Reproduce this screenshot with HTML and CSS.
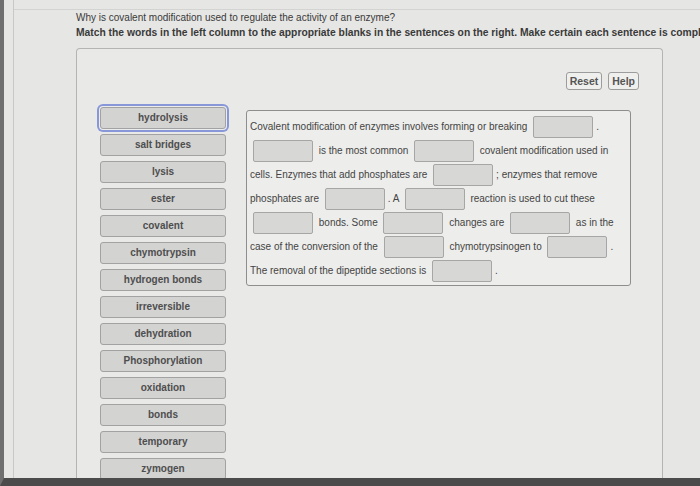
FILE: index.html
```html
<!DOCTYPE html>
<html lang="en">
<head>
  <meta charset="UTF-8" />
  <meta name="viewport" content="width=device-width, initial-scale=1.0"/>
  <title>Covalent modification</title>
  <link rel="stylesheet" href="styles.css">
</head>
<body>
  <div class="screen">
    <div class="question">
      <p>Why is covalent modification used to regulate the activity of an enzyme?</p>
      <p class="instructions">Match the words in the left column to the appropriate blanks in the sentences on the right. Make certain each sentence is complete before submitting your answer.</p>
    </div>

    <div class="panel">
      <div class="toolbar">
        <button class="btn">Reset</button>
        <button class="btn">Help</button>
      </div>

      <div class="workspace">
        <div class="word-bank">
          <div class="tile selected">hydrolysis</div>
          <div class="tile">salt bridges</div>
          <div class="tile">lysis</div>
          <div class="tile">ester</div>
          <div class="tile">covalent</div>
          <div class="tile">chymotrypsin</div>
          <div class="tile">hydrogen bonds</div>
          <div class="tile">irreversible</div>
          <div class="tile">dehydration</div>
          <div class="tile">Phosphorylation</div>
          <div class="tile">oxidation</div>
          <div class="tile">bonds</div>
          <div class="tile">temporary</div>
          <div class="tile">zymogen</div>
        </div>

        <div class="sentences">
          Covalent modification of enzymes involves forming or breaking <span class="blank"></span>.
          <span class="blank"></span> is the most common <span class="blank"></span> covalent modification used in
          cells. Enzymes that add phosphates are <span class="blank"></span>; enzymes that remove
          phosphates are <span class="blank"></span>. A <span class="blank"></span> reaction is used to cut these
          <span class="blank"></span> bonds. Some <span class="blank"></span> changes are <span class="blank"></span> as in the
          case of the conversion of the <span class="blank"></span> chymotrypsinogen to <span class="blank"></span>.
          The removal of the dipeptide sections is <span class="blank"></span>.
        </div>
      </div>
    </div>
  </div>
</body>
</html>
```

FILE: styles.css
```css
* {
  box-sizing: border-box;
}

body {
  margin: 0;
  height: 486px;
  overflow: hidden;
  background-color: #e6e6e4;
  color: #3a3a3a;
  font-family: "Liberation Sans", Arial, sans-serif;
  border-left: 4px solid #6f6f6f;
  border-bottom: 8px solid #4b4b4b;
}

.screen {
  height: 100%;
  margin-left: 9px;
  padding-top: 9px;
  border-left: 1px solid #c8c8c6;
  display: flex;
  flex-direction: column;
}

.question {
  flex-shrink: 0;
  border-top: 1px solid #d3d3d1;
  padding-left: 62px;
  font-size: 10px;
  line-height: 15px;
  white-space: nowrap;
  overflow: hidden;
}

.question p {
  margin: 0;
}

.instructions {
  font-weight: bold;
  font-size: 10.3px;
}

.panel {
  flex: 1;
  min-height: 0;
  overflow: hidden;
  margin: 8px 37px 0 62px;
  padding: 23px 23px 0;
  border: 1px solid #b4b4b2;
  border-bottom: none;
  border-radius: 4px 4px 0 0;
  background-color: #e9e9e7;
}

.toolbar {
  display: flex;
  justify-content: flex-end;
  gap: 6px;
}

.btn {
  height: 18px;
  padding: 0 3px;
  font-family: inherit;
  font-size: 10.5px;
  font-weight: bold;
  color: #555;
  background-color: #efefed;
  border: 1px solid #9c9c9c;
  border-radius: 3px;
}

.workspace {
  display: flex;
  align-items: flex-start;
  gap: 20px;
  margin-top: 17px;
}

.word-bank {
  width: 126px;
  display: flex;
  flex-direction: column;
  gap: 5px;
}

.tile {
  height: 22px;
  line-height: 20px;
  text-align: center;
  font-size: 10px;
  font-weight: bold;
  color: #4e4e4e;
  background-color: #d3d3d2;
  border: 1px solid #a2a2a2;
  border-radius: 3px;
}

.tile.selected {
  box-shadow: 0 0 0 1px #ececec, 0 0 0 3px #8797d8;
}

.sentences {
  width: 385px;
  margin-top: 3px;
  padding: 4px 3px 2px;
  font-size: 10px;
  line-height: 24px;
  color: #444;
  background-color: #ededeb;
  border: 1px solid #8e8e8e;
  border-radius: 3px;
}

.blank {
  display: inline-block;
  width: 60px;
  height: 22px;
  margin: 0 3px;
  vertical-align: middle;
  background-color: #d7d7d6;
  border: 1px solid #a6a6a6;
  border-radius: 2px;
}
```
